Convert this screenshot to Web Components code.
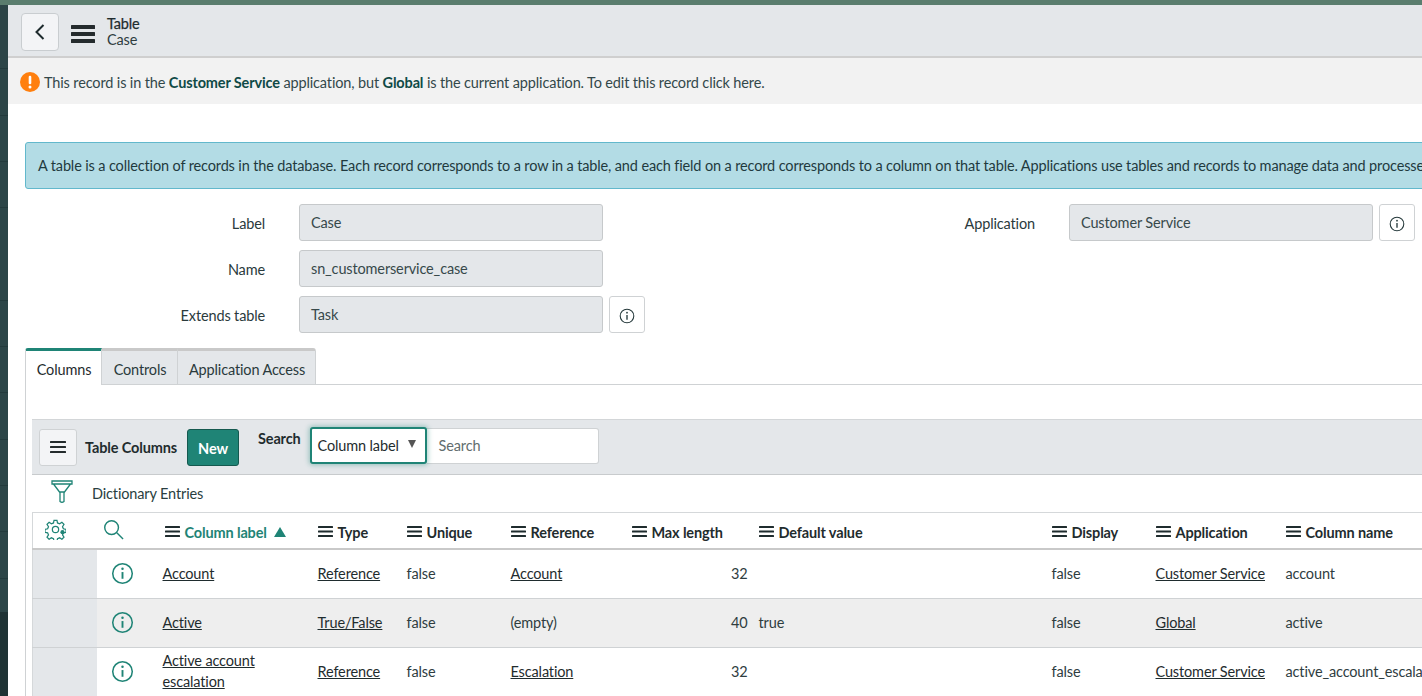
<!DOCTYPE html>
<html>
<head>
<meta charset="utf-8">
<title>Table - Case</title>
<style>
  html, body { margin: 0; padding: 0; height: 100%; overflow: hidden; }
  body {
    background: #fff;
    color: #293e40;
    font-family: Lato, "Noto Sans", sans-serif;
    font-size: 14.5px;
    letter-spacing: -0.14px;
  }
  #top { height: 5px; background: #5a7d6e; }
  #shell { display: flex; height: 691px; width: 1422px; }
  #rail {
    flex: none;
    width: 8px;
    background:
      linear-gradient(#1f3335, #1f3335) bottom / 100% 84px no-repeat,
      repeating-linear-gradient(#2c4547 0 45.3px, #233a3c 45.3px 46.3px) 0 18px;
  }
  #main { flex: 1; min-width: 0; overflow: hidden; }
</style>
</head>
<body>
<div id="top"></div>
<div id="shell">
  <div id="rail"></div>
  <div id="main">
    <sn-form-header title="Table" subtitle="Case"></sn-form-header>
    <sn-notice>This record is in the <b>Customer Service</b> application, but <b>Global</b> is the current application. To edit this record click here.</sn-notice>
    <sn-help-box>A table is a collection of records in the database. Each record corresponds to a row in a table, and each field on a record corresponds to a column on that table. Applications use tables and records to manage data and processes.</sn-help-box>
    <sn-form>
      <sn-field label="Label" value="Case"></sn-field>
      <sn-field label="Application" value="Customer Service" info></sn-field>
      <sn-field label="Name" value="sn_customerservice_case"></sn-field>
      <span></span>
      <sn-field label="Extends table" value="Task" info></sn-field>
    </sn-form>
    <sn-tabs></sn-tabs>
    <sn-related-list></sn-related-list>
  </div>
</div>

<script>
const infoIcon = (size, stroke) => `
  <svg width="${size}" height="${size}" viewBox="0 0 24 24" fill="none" stroke="${stroke}" stroke-width="1.6">
    <circle cx="12" cy="12" r="10.2"/>
    <path d="M12 10.5v7" stroke-width="2"/>
    <circle cx="12" cy="7" r="1.3" fill="${stroke}" stroke="none"/>
  </svg>`;

const menuIcon = (w, h, t, color) => `
  <svg width="${w}" height="${h}" viewBox="0 0 ${w} ${h}" fill="${color}">
    <rect width="${w}" height="${t}" rx="0.5"/>
    <rect y="${(h - t) / 2}" width="${w}" height="${t}" rx="0.5"/>
    <rect y="${h - t}" width="${w}" height="${t}" rx="0.5"/>
  </svg>`;

class SnFormHeader extends HTMLElement {
  constructor() {
    super();
    this.attachShadow({ mode: 'open' });
  }

  connectedCallback() {
    this.shadowRoot.innerHTML = `
      <style>
        :host {
          display: flex;
          align-items: center;
          height: 53px;
          padding: 2px 0 0 13px;
          box-sizing: border-box;
          background: #e4e7ea;
          border-bottom: 2px solid #cfcfcf;
        }
        .back {
          width: 38px;
          height: 38px;
          box-sizing: border-box;
          display: flex;
          align-items: center;
          justify-content: center;
          background: #f3f4f6;
          border: 1px solid #c9cdd0;
          border-radius: 4px;
          margin-right: 12px;
        }
        .menu { display: flex; margin: 4px 12px 0 0; }
        .titles { line-height: 16px; color: #1f2c2e; }
        .titles div:first-child { -webkit-text-stroke: 0.25px #1f2c2e; }
        .titles div:last-child { color: #2f3d3f; }
      </style>
      <div class="back">
        <svg width="12" height="18" viewBox="0 0 12 18" fill="none" stroke="#1e2b2d" stroke-width="2"><path d="M9.5 2L2.5 9l7 7"/></svg>
      </div>
      <div class="menu">${menuIcon(24, 18, 4, '#242b2d')}</div>
      <div class="titles"><div>${this.getAttribute('title')}</div><div>${this.getAttribute('subtitle')}</div></div>
    `;
  }
}

class SnNotice extends HTMLElement {
  constructor() {
    super();
    this.attachShadow({ mode: 'open' });
    this.shadowRoot.innerHTML = `
      <style>
        :host {
          display: flex;
          align-items: center;
          box-sizing: border-box;
          height: 46px;
          padding: 2px 0 0 12px;
          gap: 4px;
          background: #f2f2f2;
          color: #33484a;
        }
        ::slotted(b) { color: #0f4a46; font-weight: 700; }
      </style>
      <svg width="20" height="20" viewBox="0 0 20 20">
        <circle cx="10" cy="10" r="10" fill="#ff7f0e"/>
        <rect x="8.7" y="3.8" width="2.6" height="8.4" rx="1.2" fill="#fff"/>
        <circle cx="10" cy="15" r="1.5" fill="#fff"/>
      </svg>
      <div><slot></slot></div>
    `;
  }
}

class SnHelpBox extends HTMLElement {
  constructor() {
    super();
    this.attachShadow({ mode: 'open' });
    this.shadowRoot.innerHTML = `
      <style>
        :host {
          display: block;
          box-sizing: border-box;
          margin: 38px 0 0 17px;
          height: 47px;
          width: 1420px;
          padding-left: 12px;
          line-height: 45px;
          white-space: nowrap;
          background: #b3dce5;
          border: 1px solid #62b8cc;
          border-radius: 3px;
          color: #1f3a3e;
        }
      </style>
      <slot></slot>
    `;
  }
}

class SnForm extends HTMLElement {
  constructor() {
    super();
    this.attachShadow({ mode: 'open' });
    this.shadowRoot.innerHTML = `
      <style>
        :host {
          display: grid;
          grid-template-columns: 770px 1fr;
          row-gap: 9px;
          margin: 15px 0 0 17px;
        }
      </style>
      <slot></slot>
    `;
  }
}

class SnField extends HTMLElement {
  constructor() {
    super();
    this.attachShadow({ mode: 'open' });
  }

  connectedCallback() {
    const info = this.hasAttribute('info') ? `<div class="info">${infoIcon(16, '#24383a')}</div>` : '';
    this.shadowRoot.innerHTML = `
      <style>
        :host { display: flex; align-items: center; height: 37px; }
        label { width: 240px; padding-top: 2px; text-align: right; margin-right: 34px; color: #2a3a3c; }
        .value {
          width: 304px;
          height: 37px;
          box-sizing: border-box;
          padding: 0 11px;
          line-height: 35px;
          background: #e4e7ea;
          border: 1px solid #c6c9cb;
          border-radius: 3px;
          color: #37494b;
        }
        .info {
          width: 36px;
          height: 37px;
          box-sizing: border-box;
          margin-left: 6px;
          padding-top: 2px;
          display: flex;
          align-items: center;
          justify-content: center;
          border: 1px solid #cfd2d4;
          border-radius: 3px;
          background: #fff;
        }
      </style>
      <label>${this.getAttribute('label')}</label>
      <div class="value">${this.getAttribute('value')}</div>
      ${info}
    `;
  }
}

class SnTabs extends HTMLElement {
  constructor() {
    super();
    this.attachShadow({ mode: 'open' });
    this.shadowRoot.innerHTML = `
      <style>
        :host {
          display: flex;
          height: 37px;
          margin: 15px 0 0 17px;
          border-bottom: 1px solid #cfd2d4;
          box-sizing: border-box;
        }
        .tab {
          box-sizing: border-box;
          height: 36px;
          padding-left: 1px;
          text-align: center;
          line-height: 37px;
          background: #e4e7ea;
          border-top: 3px solid #c9c9c9;
          border-right: 1px solid #cfd2d4;
          color: #2a3a3c;
        }
        .tab:nth-of-type(1) { width: 77px; }
        .tab:nth-of-type(2) { width: 76px; }
        .tab:nth-of-type(3) { width: 138px; border-radius: 0 3px 0 0; }
        .active {
          background: #fff;
          border-top-color: #1f8476;
          border-left: 1px solid #cfd2d4;
          height: 37px;
          color: #1f2c2e;
          border-radius: 3px 0 0 0;
        }
      </style>
      <div class="tab active">Columns</div>
      <div class="tab">Controls</div>
      <div class="tab">Application Access</div>
    `;
  }
}

class SnRelatedList extends HTMLElement {
  constructor() {
    super();
    this.attachShadow({ mode: 'open' });
  }

  connectedCallback() {
    const cols = ['Type', 'Unique', 'Reference', 'Max length', 'Default value', 'Display', 'Application', 'Column name'];
    const rows = [
      ['Account', 'Reference', 'false', 'Account', '32', '', 'false', 'Customer Service', 'account'],
      ['Active', 'True/False', 'false', '(empty)', '40', 'true', 'false', 'Global', 'active'],
      ['Active account escalation', 'Reference', 'false', 'Escalation', '32', '', 'false', 'Customer Service', 'active_account_escalation']
    ];
    const link = (t) => `<a>${t}</a>`;
    const head = cols.map(c => `<th><span class="th">${menuIcon(15, 11, 2, '#1f2c2e')}${c}</span></th>`).join('');
    const body = rows.map(r => `
      <tr>
        <td class="sel"></td>
        <td class="ic">${infoIcon(23, '#1f8476')}</td>
        <td>${link(r[0])}</td>
        <td>${link(r[1])}</td>
        <td>${r[2]}</td>
        <td>${r[3] === '(empty)' ? r[3] : link(r[3])}</td>
        <td class="num">${r[4]}</td>
        <td>${r[5]}</td>
        <td>${r[6]}</td>
        <td>${link(r[7])}</td>
        <td class="name">${r[8]}</td>
      </tr>`).join('');

    this.shadowRoot.innerHTML = `
      <style>
        :host {
          display: block;
          margin-left: 17px;
          padding: 34px 0 0 6px;
          border-left: 1px solid #cfd2d4;
          height: 400px;
          overflow: hidden;
        }
        .bar {
          display: flex;
          align-items: center;
          height: 56px;
          box-sizing: border-box;
          background: #e4e7ea;
          border-top: 1px solid #d3d6d8;
          border-bottom: 1px solid #c8cbcd;
          padding-left: 7px;
          width: 1400px;
        }
        .ham {
          box-sizing: border-box;
          width: 38px;
          height: 37px;
          display: flex;
          align-items: center;
          justify-content: center;
          background: #f3f4f6;
          border: 1px solid #cfd2d4;
          border-radius: 3px;
          margin-right: 8px;
        }
        .title { font-weight: 700; color: #1f2c2e; margin-right: 10px; }
        .new {
          box-sizing: border-box;
          width: 52px;
          height: 37px;
          line-height: 37px;
          text-align: center;
          background: #1f8476;
          border: 1px solid #15594f;
          border-radius: 3px;
          color: #fff;
          font-weight: 700;
          margin-right: 19px;
        }
        .lbl { font-weight: 700; color: #1f2c2e; margin: -17px 9px 0 0; }
        .select {
          box-sizing: border-box;
          width: 117px;
          height: 37px;
          line-height: 33px;
          padding-left: 6px;
          border: 2px solid #1f8476;
          border-radius: 3px;
          background: #fff;
          box-shadow: 0 0 5px 1px rgba(31,132,118,.4);
          display: flex;
          color: #1f2c2e;
          position: relative;
          z-index: 1;
          margin-top: -3px;
        }
        .caret {
          width: 0;
          height: 0;
          margin: 11px 0 0 9px;
          border-left: 4.5px solid transparent;
          border-right: 4.5px solid transparent;
          border-top: 8px solid #555;
        }
        .search {
          box-sizing: border-box;
          width: 172px;
          height: 36px;
          line-height: 34px;
          padding-left: 12px;
          background: #fff;
          border: 1px solid #cfd2d4;
          border-left: 0;
          border-radius: 0 3px 3px 0;
          color: #626d6e;
          margin-top: -3px;
        }
        .filter {
          display: flex;
          align-items: center;
          height: 37px;
          padding-left: 18px;
        }
        .filter svg { margin: -4px 19px 0 1px; }
        table {
          border-collapse: collapse;
          table-layout: fixed;
          width: 1500px;
          border-top: 1px solid #d5d8da;
          border-left: 1px solid #d5d8da;
        }
        th {
          height: 32px;
          padding: 3px 0 0;
          text-align: left;
          font-weight: 700;
          color: #1f2c2e;
          border-bottom: 2px solid #c9c9c9;
          white-space: nowrap;
        }
        .th { display: inline-flex; align-items: center; gap: 5px; }
        .th svg { flex: none; margin-top: -2px; }
        .sorted { color: #1f8476; }
        .sorted .th { margin-left: 2px; }
        td {
          height: 46px;
          padding: 0 0 2px;
          line-height: 21px;
          border-bottom: 1px solid #cfd2d4;
          color: #2f3d3f;
          white-space: nowrap;
        }
        td:nth-child(3) { white-space: normal; padding-right: 20px; }
        tr:nth-child(even) td { background: #eeeeee; }
        td.sel, tr:nth-child(even) td.sel { background: #e4e7ea; }
        td.ic { text-align: left; padding-left: 14px; }
        td.ic svg { display: block; }
        td.num { text-align: right; padding-right: 11px; }
        a { color: #1f2c2e; text-decoration: underline; }
        .tool { display: block; margin-top: -5px; }
      </style>
      <div class="bar">
        <div class="ham">${menuIcon(16, 12, 2, '#242b2d')}</div>
        <div class="title">Table Columns</div>
        <div class="new">New</div>
        <div class="lbl">Search</div>
        <div class="select">Column label<span class="caret"></span></div>
        <div class="search">Search</div>
      </div>
      <div class="filter">
        <svg width="22" height="23" viewBox="0 0 22 23" fill="none" stroke="#1f8476" stroke-width="1.3">
          <path d="M1 1h20v3H1zM2.5 4l6 8h5l6-8M8.5 12h5M9 12v9.5q2 1.5 4 0V12"/>
        </svg>
        Dictionary Entries
      </div>
      <table>
        <colgroup>
          <col style="width:64px"><col style="width:66px"><col style="width:155px">
          <col style="width:89px"><col style="width:104px"><col style="width:121px">
          <col style="width:127px"><col style="width:293px"><col style="width:104px">
          <col style="width:130px"><col>
        </colgroup>
        <thead>
          <tr>
            <th>
              <svg class="tool" style="margin-left:12px" width="21" height="21" viewBox="0 0 24 24" fill="none" stroke="#1f8476" stroke-width="1.4">
                <circle cx="12" cy="12" r="3.6"/>
                <path d="M10.3 1.5h3.4l.6 3 2.4 1 2.6-1.7 2.4 2.4-1.7 2.6 1 2.4 3 .6v3.4l-3 .6-1 2.4 1.7 2.6-2.4 2.4-2.6-1.7-2.4 1-.6 3h-3.4l-.6-3-2.4-1-2.6 1.7-2.4-2.4 1.7-2.6-1-2.4-3-.6v-3.4l3-.6 1-2.4-1.7-2.6 2.4-2.4 2.6 1.7 2.4-1z"/>
                <circle cx="20" cy="15" r="2.4" fill="#1f8476" stroke="none"/>
              </svg>
            </th>
            <th>
              <svg class="tool" style="margin-left:6px" width="21" height="21" viewBox="0 0 22 22" fill="none" stroke="#1f8476" stroke-width="1.5">
                <circle cx="9" cy="9" r="7.2"/><path d="M14.5 14.5L21 21"/>
              </svg>
            </th>
            <th class="sorted"><span class="th">${menuIcon(15, 11, 2, '#1f2c2e')}Column label
              <svg width="12" height="10" viewBox="0 0 12 10" fill="#1f8476" style="margin-left:2px"><path d="M6 0l6 10H0z"/></svg></span></th>
            ${head}
          </tr>
        </thead>
        <tbody>${body}</tbody>
      </table>
    `;
  }
}

customElements.define('sn-form-header', SnFormHeader);
customElements.define('sn-notice', SnNotice);
customElements.define('sn-help-box', SnHelpBox);
customElements.define('sn-form', SnForm);
customElements.define('sn-field', SnField);
customElements.define('sn-tabs', SnTabs);
customElements.define('sn-related-list', SnRelatedList);
</script>
</body>
</html>
